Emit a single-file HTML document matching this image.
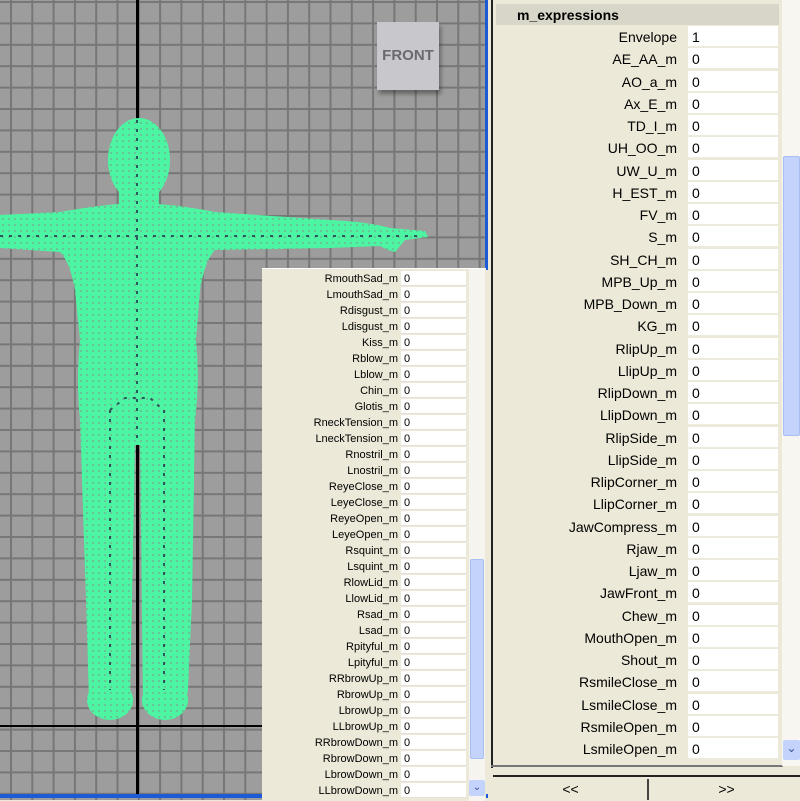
<!DOCTYPE html>
<html><head><meta charset="utf-8"><style>
*{margin:0;padding:0;box-sizing:border-box}
body{width:800px;height:800px;overflow:hidden;position:relative;background:#ece9d8;font-family:"Liberation Sans",sans-serif}
#sp{position:absolute;left:262px;top:268px;width:224px;height:532px;background:#ece9d8;border-top:1px solid #fff}
#sp .r{position:absolute;left:0;height:16px;width:224px;font-size:11px;line-height:16px}
#sp .r .l{position:absolute;right:88px;top:0}
#sp .r .v{position:absolute;left:139px;top:0;width:65px;height:15px;background:#fff;border-bottom:1px solid #e4e2d6;padding-left:3px}
#rp .r{position:absolute;left:0;height:22.25px;width:290px;font-size:14px;line-height:22px}
#rp .r .l{position:absolute;right:105px;top:0}
#rp .r .v{position:absolute;left:196px;top:0;width:90px;height:21px;background:#fff;border-bottom:1px solid #ecebe0;padding-left:4px}
</style></head><body>
<svg style="position:absolute;left:0;top:0" width="486" height="800" viewBox="0 0 486 800">
<defs>
<pattern id="g" width="21.3" height="21.4" patternUnits="userSpaceOnUse" x="10" y="1"><rect width="21.3" height="21.4" fill="#9d9d9d"/><rect width="2" height="21.4" fill="#777"/><rect width="21.3" height="2" fill="#777"/></pattern>
<pattern id="m" width="6" height="6" patternUnits="userSpaceOnUse"><rect width="6" height="6" fill="#4df5a2"/><rect x="2" y="2" width="2" height="2" fill="#7aa58f" opacity=".6"/></pattern></defs>
<rect width="486" height="800" fill="url(#g)"/>
<rect x="136" y="0" width="3" height="795" fill="#000"/>
<rect x="0" y="725" width="486" height="2" fill="#000"/>
<g fill="url(#m)">
<ellipse cx="139" cy="160" rx="31" ry="42"/>
<rect x="119" y="180" width="40" height="35"/>
<path d="M0 215 L60 212 Q100 205 120 204 L158 204 Q185 206 215 212 L330 220 Q370 222 390 228 L425 231 L428 237 L405 240 L395 252 L388 250 L380 246 L330 248 L215 250 Q205 260 200 290 L196 340 Q200 380 195 420 L192 600 L188 690 L186 700 L143 700 L140 445 L135 445 L130 700 L89 700 L86 600 L80 420 Q76 380 80 340 L75 290 Q70 262 60 252 L0 248 Z"/>
<ellipse cx="110" cy="700" rx="23" ry="20"/>
<ellipse cx="165" cy="700" rx="23" ry="20"/>
</g>
<g stroke="#1a1a40" stroke-width="2" fill="none" stroke-dasharray="3 6" opacity=".7">
<path d="M0 236 L420 236"/><path d="M110 410 L125 398 L150 398 L163 410"/><path d="M110 410 L110 690"/><path d="M164 410 L164 690"/><path d="M137 120 L137 440"/>
</g>
</svg>
<div style="position:absolute;left:0;top:794px;width:490px;height:4px;background:#1c5ad8"></div>
<div style="position:absolute;left:485px;top:0;width:3px;height:270px;background:#1c5ad8"></div>
<div style="position:absolute;left:377px;top:22px;width:62px;height:68px;background:#c8c8cc;box-shadow:2px 4px 4px rgba(0,0,0,.35);color:#6a6a6e;font-weight:bold;font-size:15px;text-align:center;line-height:68px">FRONT</div>
<div id="sp">
<div style="position:absolute;left:207px;top:0;width:16px;height:532px;background:#f5f4ef"></div>
<div style="position:absolute;left:208px;top:290px;width:14px;height:200px;background:#c3d3fb;border:1px solid #a9bff2;border-radius:2px"></div>
<div style="position:absolute;left:207px;top:511px;width:16px;height:16px;background:#c3d3fb;border-radius:2px;font-size:10px;color:#34529a;text-align:center;line-height:16px">&#8964;</div>
</div>
<div style="position:absolute;left:488px;top:0;width:312px;height:800px;background:#ece9d8"></div>
<div style="position:absolute;left:491px;top:0;width:2px;height:768px;background:#222"></div>
<div style="position:absolute;left:491px;top:765px;width:292px;height:2px;background:#777"></div>
<div style="position:absolute;left:493px;top:775px;width:307px;height:2px;background:#222"></div>
<div style="position:absolute;left:494px;top:779px;width:155px;height:21px;background:#ece9d8;border-right:2px solid #444;font-size:14px;text-align:center;line-height:21px">&lt;&lt;</div>
<div style="position:absolute;left:653px;top:779px;width:147px;height:21px;background:#ece9d8;font-size:14px;text-align:center;line-height:21px">&gt;&gt;</div>
<div style="position:absolute;left:496px;top:4px;width:283px;height:21px;background:#d8d5c9;font-weight:bold;font-size:14px;line-height:22px;padding-left:21px">m_expressions</div>
<div style="position:absolute;left:782px;top:0;width:18px;height:766px;background:#f7f6f1"></div>
<div style="position:absolute;left:783px;top:156px;width:17px;height:280px;background:#c3d3fb;border:1px solid #a9bff2;border-radius:2px"></div>
<div style="position:absolute;left:783px;top:740px;width:17px;height:20px;background:#c3d3fb;border-radius:2px;font-size:12px;color:#34529a;text-align:center;line-height:16px">&#8964;</div>
<div id="rp" style="position:absolute;left:492px;top:26px;width:290px;height:740px"></div>
<script>
var sl="RmouthSad_m LmouthSad_m Rdisgust_m Ldisgust_m Kiss_m Rblow_m Lblow_m Chin_m Glotis_m RneckTension_m LneckTension_m Rnostril_m Lnostril_m ReyeClose_m LeyeClose_m ReyeOpen_m LeyeOpen_m Rsquint_m Lsquint_m RlowLid_m LlowLid_m Rsad_m Lsad_m Rpityful_m Lpityful_m RRbrowUp_m RbrowUp_m LbrowUp_m LLbrowUp_m RRbrowDown_m RbrowDown_m LbrowDown_m LLbrowDown_m".split(" ");
var h="";sl.forEach(function(n,i){h+='<div class="r" style="top:'+(2+i*16)+'px"><span class="l">'+n+'</span><span class="v">0</span></div>'});
document.getElementById("sp").insertAdjacentHTML("beforeend",h);
var rl="Envelope AE_AA_m AO_a_m Ax_E_m TD_I_m UH_OO_m UW_U_m H_EST_m FV_m S_m SH_CH_m MPB_Up_m MPB_Down_m KG_m RlipUp_m LlipUp_m RlipDown_m LlipDown_m RlipSide_m LlipSide_m RlipCorner_m LlipCorner_m JawCompress_m Rjaw_m Ljaw_m JawFront_m Chew_m MouthOpen_m Shout_m RsmileClose_m LsmileClose_m RsmileOpen_m LsmileOpen_m".split(" ");
h="";rl.forEach(function(n,i){h+='<div class="r" style="top:'+(i*22.25)+'px"><span class="l">'+n+'</span><span class="v">'+(i?0:1)+'</span></div>'});
document.getElementById("rp").innerHTML=h;
</script>
</body></html>
